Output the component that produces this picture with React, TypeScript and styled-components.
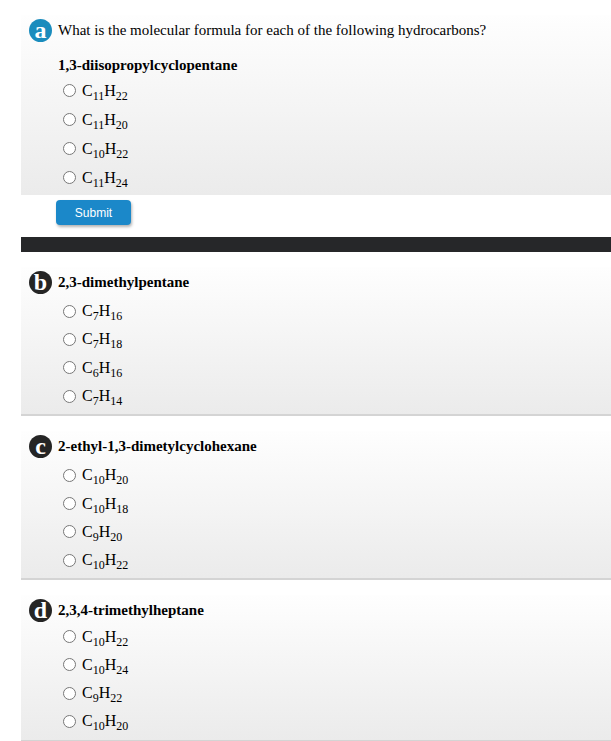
import styled, { createGlobalStyle } from "styled-components"

const GlobalStyle = createGlobalStyle`
    html, body {
        margin: 0;
        padding: 0;
        background: #ffffff;
    }
    body {
        font-family: "Liberation Serif", "Times New Roman", serif;
        color: #000;
    }
`;

const Page = styled.div`
    padding: 15px 0 0 21px;
    width: 590px;
    overflow: hidden;
`;

const Part = styled.section<{ $bordered?: boolean }>`
    background: linear-gradient(to bottom, #fefefe 0%, #ebebeb 100%);
    padding: 4px 0 ${p => (p.$bordered ? "4px" : "3px")} 0;
    margin-top: ${p => (p.$bordered ? "15px" : "0")};
    border-bottom: ${p => (p.$bordered ? "2px solid #d4d4d4" : "none")};
`;

const Header = styled.div`
    display: flex;
    align-items: center;
    gap: 6px;
    height: 23px;
    padding-left: 8px;
`;

const Badge = styled.span<{ $tone: "blue" | "dark" }>`
    flex: none;
    width: 23px;
    height: 23px;
    border-radius: 50%;
    background: ${p => (p.$tone === "blue" ? "#1a8cbd" : "#252525")};
    color: #fff;
    font-weight: bold;
    font-size: 24px;
    line-height: 20px;
    display: flex;
    align-items: center;
    justify-content: center;
    padding-bottom: 1px;
    box-sizing: border-box;
`;

const Question = styled.span`
    font-size: 15px;
`;

const Name = styled.span`
    font-size: 15px;
    font-weight: bold;
`;

const Compound = styled.div`
    font-size: 15px;
    font-weight: bold;
    padding-left: 37px;
    margin-top: 13px;
    height: 20px;
    line-height: 20px;
`;

const Options = styled.div<{ $gap: number; $row: number }>`
    padding-left: 37px;
    margin-top: ${p => p.$gap}px;
    display: flex;
    flex-direction: column;

    label {
        height: ${p => p.$row}px;
    }
`;

const Option = styled.label`
    display: flex;
    align-items: center;
    font-size: 16px;

    input {
        margin: 0 6px 0 5px;
        width: 13px;
        height: 13px;
    }
`;

const Formula = styled.span`
    line-height: 20px;

    sub {
        font-size: 12px;
        vertical-align: -4px;
        line-height: 0;
    }
`;

const SubmitRow = styled.div`
    padding: 5px 0 12px 35px;
`;

const SubmitButton = styled.button`
    width: 75px;
    height: 25px;
    border: none;
    border-radius: 4px;
    background: #1b88c9;
    color: #fff;
    font-family: "Liberation Sans", Arial, sans-serif;
    font-size: 12px;
    box-shadow: 1px 2px 3px rgba(0, 0, 0, 0.3);
    cursor: pointer;
`;

const DarkBar = styled.div`
    height: 15px;
    background: #262729;
`;

type F = [number, number];

const parts: { letter: string; name: string; gap: number; options: F[] }[] = [
    { letter: "b", name: "2,3-dimethylpentane", gap: 3, options: [[7, 16], [7, 18], [6, 16], [7, 14]] },
    { letter: "c", name: "2-ethyl-1,3-dimetylcyclohexane", gap: 3, options: [[10, 20], [10, 18], [9, 20], [10, 22]] },
    { letter: "d", name: "2,3,4-trimethylheptane", gap: 0, options: [[10, 22], [10, 24], [9, 22], [10, 20]] },
];

const partA: F[] = [[11, 22], [11, 20], [10, 22], [11, 24]];

function OptionList({ group, items, gap, row = 28.3 }: { group: string; items: F[]; gap: number; row?: number }) {
    return (
        <Options $gap={gap} $row={row}>
            {items.map(([c, h], i) => (
                <Option key={i}>
                    <input type="radio" name={group} />
                    <Formula>
                        C<sub>{c}</sub>H<sub>{h}</sub>
                    </Formula>
                </Option>
            ))}
        </Options>
    );
}

export default function App() {
    return (
        <Page>
            <GlobalStyle />
            <Part>
                <Header>
                    <Badge $tone="blue">a</Badge>
                    <Question>What is the molecular formula for each of the following hydrocarbons?</Question>
                </Header>
                <Compound>1,3-diisopropylcyclopentane</Compound>
                <OptionList group="a" items={partA} gap={1} row={29} />
            </Part>
            <SubmitRow>
                <SubmitButton>Submit</SubmitButton>
            </SubmitRow>
            <DarkBar />
            {parts.map(p => (
                <Part key={p.letter} $bordered>
                    <Header>
                        <Badge $tone="dark">{p.letter}</Badge>
                        <Name>{p.name}</Name>
                    </Header>
                    <OptionList group={p.letter} items={p.options} gap={p.gap} />
                </Part>
            ))}
        </Page>
    );
}
